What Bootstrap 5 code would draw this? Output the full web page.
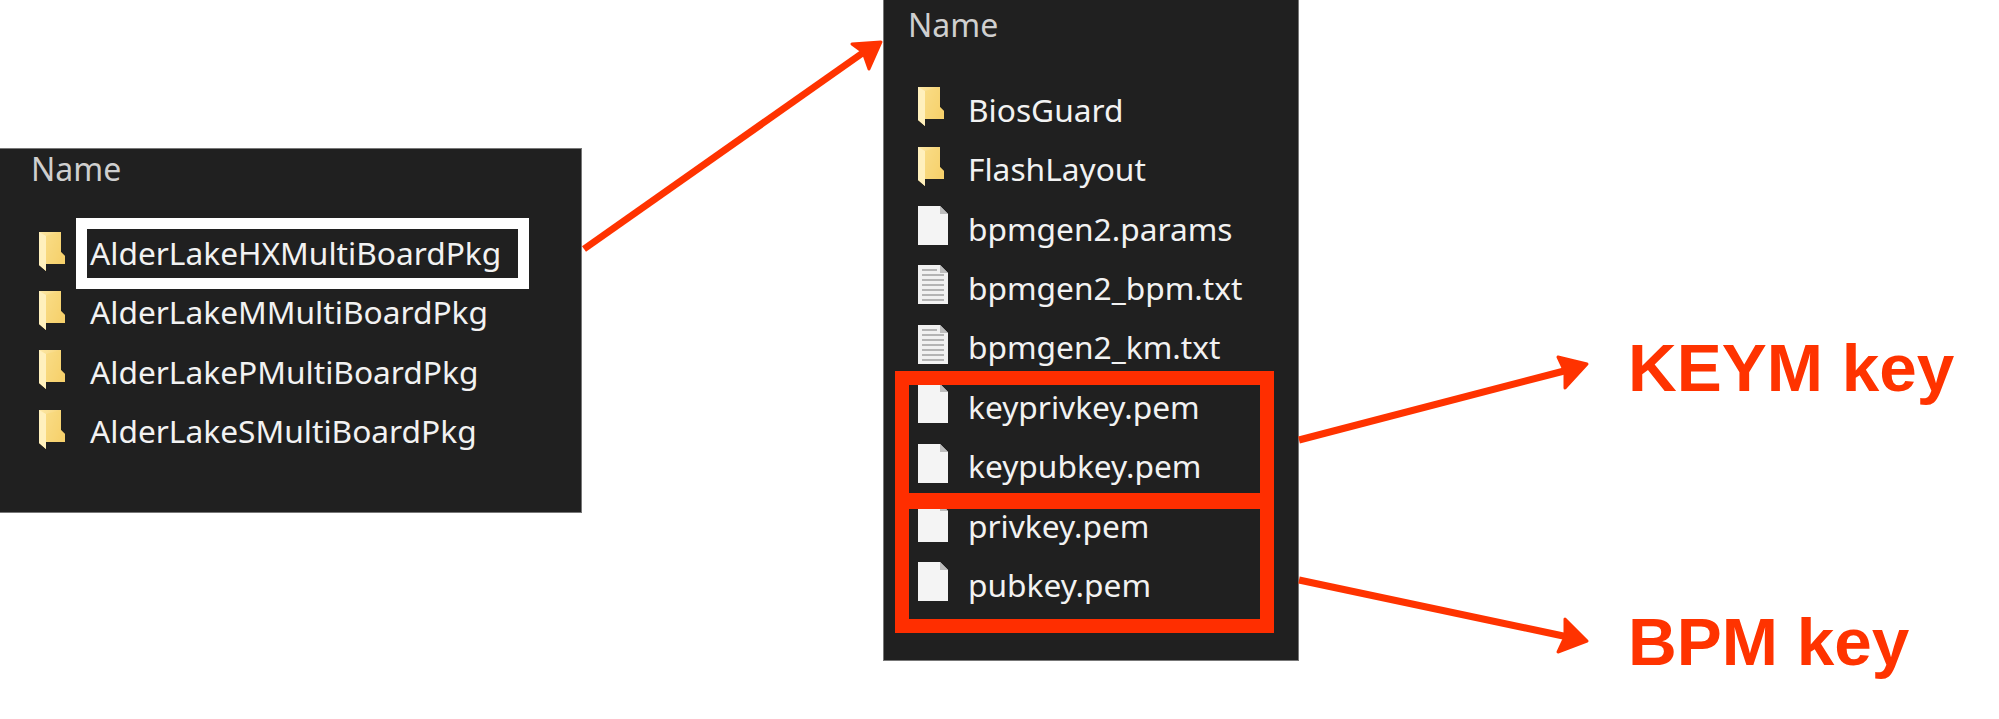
<!DOCTYPE html>
<html>
<head>
  <meta charset="UTF-8">
  <title>Key files</title>
  <link href="https://cdn.jsdelivr.net/npm/bootstrap@5.3.0/dist/css/bootstrap.min.css" rel="stylesheet">
  <style>
    body { background: #fff; margin: 0; }
    .shot-canvas { width: 1999px; height: 719px; overflow: hidden; }
    .shot-panel { background: #202020; border: 1px solid #777; color: #f2f2f2; font-family: "Noto Sans", sans-serif; font-size: 31.7px; }
    .panel-left { width: 582px; height: 365px; margin-top: 148px; border-left: 0; padding-left: 39px; }
    .panel-right { width: 416px; height: 661px; margin-left: 301px; border-top: 0; padding-left: 34px; }
    .name-head { height: 40px; color: #cfcfcf; font-size: 32px; line-height: 40px; }
    .panel-left .name-head { margin-left: -8px; margin-bottom: 34px; }
    .panel-right .name-head { margin-left: -10px; margin-top: 5px; margin-bottom: 35px; }
    .file-row { height: 59.4px; }
    .icon-slot { width: 30px; height: 39px; margin-right: 21px; margin-bottom: 6px; flex: none; }
    .panel-left .icon-slot { margin-bottom: 3px; }
    .panel-right .icon-slot { margin-right: 20px; }
    .hl-white { border: 11px solid #fff; left: 76px; top: 69px; width: 453px; height: 71px; }
    .hl-red { border: 14px solid #ff2e00; left: 11px; width: 379px; }
    .hl-keym { top: 371px; height: 136px; }
    .hl-bpm { top: 495px; height: 138px; }
    .label-col { margin-left: 329px; margin-top: 334px; gap: 206px; color: #ff3300; font-family: "Liberation Sans", sans-serif; font-weight: 700; font-size: 67.5px; line-height: 1; white-space: nowrap; }
    .arrow-layer { left: 0; top: 0; pointer-events: none; }
  </style>
</head>
<body>
  <svg width="0" height="0" class="d-block">
    <defs>
      <linearGradient id="folderBody" x1="0" y1="0" x2="1" y2="0.6">
        <stop offset="0" stop-color="#fde9a8"/>
        <stop offset="1" stop-color="#f3c95f"/>
      </linearGradient>
      <symbol id="ic-folder" viewBox="0 0 30 39">
        <path d="M0 0H22V20L26 24V32H7V39L0 33Z" fill="url(#folderBody)"/>
        <path d="M0 0L7 4V39L0 33Z" fill="#fff0bd"/>
        <path d="M7 4L22 0V20L26 24V32H7Z" fill="#f8d777" opacity=".55"/>
      </symbol>
      <symbol id="ic-file" viewBox="0 0 30 39">
        <path d="M0 0H22L30 8V39H0Z" fill="#f4f4f4"/>
        <path d="M22 0L30 8H22Z" fill="#bdbdbd"/>
      </symbol>
      <symbol id="ic-text" viewBox="0 0 30 39">
        <path d="M0 0H22L30 8V39H0Z" fill="#f1f1f1"/>
        <path d="M22 0L30 8H22Z" fill="#bdbdbd"/>
        <path d="M4 5H19M4 10H26M4 15H26M4 20H26M4 25H26M4 30H26M4 35H26" stroke="#b4b4b4" stroke-width="2"/>
      </symbol>
    </defs>
  </svg>

  <div class="shot-canvas position-relative d-flex align-items-start">
    <div class="shot-panel panel-left position-relative">
      <div class="name-head">Name</div>
      <div class="file-row d-flex align-items-center"><svg class="icon-slot"><use href="#ic-folder"/></svg><span>AlderLakeHXMultiBoardPkg</span></div>
      <div class="file-row d-flex align-items-center"><svg class="icon-slot"><use href="#ic-folder"/></svg><span>AlderLakeMMultiBoardPkg</span></div>
      <div class="file-row d-flex align-items-center"><svg class="icon-slot"><use href="#ic-folder"/></svg><span>AlderLakePMultiBoardPkg</span></div>
      <div class="file-row d-flex align-items-center"><svg class="icon-slot"><use href="#ic-folder"/></svg><span>AlderLakeSMultiBoardPkg</span></div>
      <div class="hl-white position-absolute"></div>
    </div>

    <div class="shot-panel panel-right position-relative">
      <div class="name-head">Name</div>
      <div class="file-row d-flex align-items-center"><svg class="icon-slot"><use href="#ic-folder"/></svg><span>BiosGuard</span></div>
      <div class="file-row d-flex align-items-center"><svg class="icon-slot"><use href="#ic-folder"/></svg><span>FlashLayout</span></div>
      <div class="file-row d-flex align-items-center"><svg class="icon-slot"><use href="#ic-file"/></svg><span>bpmgen2.params</span></div>
      <div class="file-row d-flex align-items-center"><svg class="icon-slot"><use href="#ic-text"/></svg><span>bpmgen2_bpm.txt</span></div>
      <div class="file-row d-flex align-items-center"><svg class="icon-slot"><use href="#ic-text"/></svg><span>bpmgen2_km.txt</span></div>
      <div class="file-row d-flex align-items-center"><svg class="icon-slot"><use href="#ic-file"/></svg><span>keyprivkey.pem</span></div>
      <div class="file-row d-flex align-items-center"><svg class="icon-slot"><use href="#ic-file"/></svg><span>keypubkey.pem</span></div>
      <div class="file-row d-flex align-items-center"><svg class="icon-slot"><use href="#ic-file"/></svg><span>privkey.pem</span></div>
      <div class="file-row d-flex align-items-center"><svg class="icon-slot"><use href="#ic-file"/></svg><span>pubkey.pem</span></div>
      <div class="hl-red hl-keym position-absolute"></div>
      <div class="hl-red hl-bpm position-absolute"></div>
    </div>

    <div class="label-col d-flex flex-column">
      <div>KEYM key</div>
      <div>BPM key</div>
    </div>

    <svg class="arrow-layer position-absolute" width="1999" height="719" viewBox="0 0 1999 719">
      <g fill="#ff3300" stroke="#ff3300" stroke-linejoin="round">
        <path d="M584 249L864 52" fill="none" stroke-width="7"/>
        <path d="M881 42L852 44L863 52L869 69Z" stroke-width="3"/>
        <path d="M1299 440L1568 370" fill="none" stroke-width="7"/>
        <path d="M1587 364L1558 357L1565 372L1565 388Z" stroke-width="3"/>
        <path d="M1299 580L1568 637" fill="none" stroke-width="7"/>
        <path d="M1587 641L1565 619L1565 637L1558 652Z" stroke-width="3"/>
      </g>
    </svg>
  </div>

  <script src="https://cdn.jsdelivr.net/npm/bootstrap@5.3.0/dist/js/bootstrap.bundle.min.js"></script>
</body>
</html>
